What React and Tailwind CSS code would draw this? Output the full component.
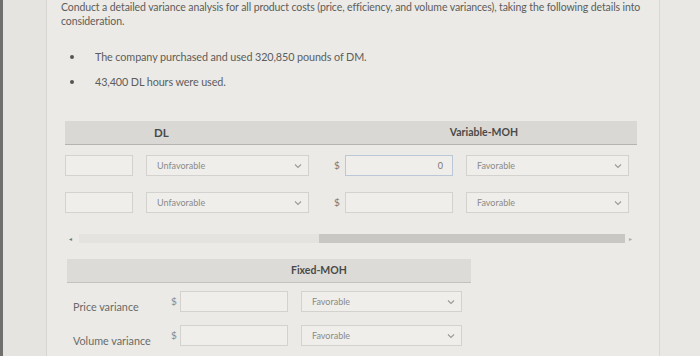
import React from "react";

const font = { fontFamily: "Lato, 'Open Sans', sans-serif" };

function Chevron() {
  return (
    <svg width="8" height="6" viewBox="0 0 8 6" className="shrink-0">
      <path d="M1 1.5 L4 4.5 L7 1.5" fill="none" stroke="#9a9a98" strokeWidth="1.1" />
    </svg>
  );
}

function Select({ label, w }) {
  return (
    <div className={`h-[21px] ${w} border border-[#d3d2ce] bg-[#efeeeb] flex items-center justify-between pl-[10px] pr-[6px]`}>
      <span className="text-[9px] text-[#8a8a88]">{label}</span>
      <Chevron />
    </div>
  );
}

function Input({ w, value, focus }) {
  return (
    <div
      className={`h-[21px] ${w} border ${focus ? "border-[#b9c7d6]" : "border-[#d3d2ce]"} bg-[#efeeeb] flex items-center justify-end pr-[9px] text-[9px] text-[#777]`}
    >
      {value}
    </div>
  );
}

function DlRow({ value, focus }) {
  return (
    <div className="flex items-center">
      <Input w="w-[68px]" />
      <div className="ml-[13px]">
        <Select label="Unfavorable" w="w-[163px]" />
      </div>
      <span className="ml-[25px] w-[11px] text-[10px] text-[#777]">$</span>
      <Input w="w-[108px]" value={value} focus={focus} />
      <div className="ml-[13px]">
        <Select label="Favorable" w="w-[163px]" />
      </div>
    </div>
  );
}

function FixedRow({ label, mt, lt }) {
  return (
    <div className={`flex items-start ${mt}`}>
      <span className={`w-[104px] pl-[6px] ${lt} leading-[12px] text-[10.8px] text-[#6a6a68]`}>{label}</span>
      <span className="w-[9px] h-[21px] flex items-center text-[10px] text-[#888]">$</span>
      <Input w="w-[108px]" />
      <div className="ml-[13px]">
        <Select label="Favorable" w="w-[161px]" />
      </div>
    </div>
  );
}

export default function App() {
  return (
    <div className="w-[700px] h-[356px] flex bg-[#ebeae6] overflow-hidden" style={font}>
      <div className="w-[3px] bg-[#6f6f6d]" />
      <div className="w-[44px] bg-[#e5e4e0] border-r border-[#d6d5d1]" />

      <div className="w-[612px] pl-[14px]">
        <p className="mt-[0px] w-[590px] text-[10.5px] leading-[14px] text-[#5d5d5b] tracking-[-0.1px]">
          Conduct a detailed variance analysis for all product costs (price, efficiency, and volume variances), taking the following details into consideration.
        </p>

        <ul className="mt-[22px] text-[10.8px] text-[#5d5d5b]">
          <li className="flex items-center h-[14px]">
            <span className="w-[4px] h-[4px] rounded-full bg-[#555] ml-[9px]" />
            <span className="ml-[21px] tracking-[-0.1px]">The company purchased and used 320,850 pounds of DM.</span>
          </li>
          <li className="flex items-center h-[14px] mt-[11px]">
            <span className="w-[4px] h-[4px] rounded-full bg-[#555] ml-[9px]" />
            <span className="ml-[21px] tracking-[-0.1px]">43,400 DL hours were used.</span>
          </li>
        </ul>

        <div className="ml-[4px] mt-[32px] w-[572px]">
          <div className="h-[24px] flex items-center bg-[#d9d8d5] border-b border-[#b5b4b1]">
            <span className="ml-[89px] text-[11.5px] font-bold text-[#4a4a48]">DL</span>
            <span className="ml-[281px] text-[10.5px] font-bold text-[#4a4a48]">Variable-MOH</span>
          </div>

          <div className="mt-[10px] flex flex-col gap-[16px]">
            <DlRow value="0" focus />
            <DlRow />
          </div>

          <div className="mt-[21px] h-[9px] flex items-center">
            <span className="w-[14px] text-[6px] text-[#777] pl-[4px]">◂</span>
            <div className="flex-1 h-[9px] bg-[#e4e3e0] flex">
              <div className="w-[240px]" />
              <div className="flex-1 bg-[#c8c7c4]" />
            </div>
            <span className="w-[12px] text-[6px] text-[#aaa] pl-[4px]">▸</span>
          </div>
        </div>

        <div className="ml-[6px] mt-[16px] w-[404px]">
          <div className="h-[24px] flex items-center bg-[#dcdbd8] border-b border-[#c2c1be]">
            <span className="ml-[224px] text-[10.5px] font-bold text-[#4a4a48]">Fixed-MOH</span>
          </div>
          <FixedRow label="Price variance" mt="mt-[8px]" lt="mt-[10px]" />
          <FixedRow label="Volume variance" mt="mt-[12px]" lt="mt-[10px]" />
        </div>
      </div>

      <div className="flex-1 border-l border-[#d9d8d4] bg-[#e9e8e4]" />
    </div>
  );
}
